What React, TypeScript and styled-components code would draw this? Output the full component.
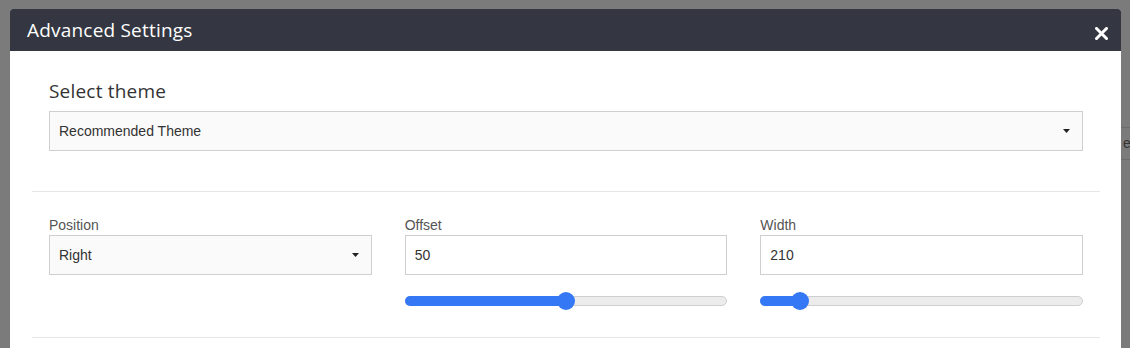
import React, {FC} from 'react';
import styled, {createGlobalStyle} from 'styled-components';

const GlobalStyle = createGlobalStyle`
  html, body {
    margin: 0;
    padding: 0;
    background: #7b7b7b;
    overflow: hidden;
  }
  * {
    box-sizing: border-box;
  }
`;

interface SliderProps {
    value: number;
    min: number;
    max: number;
}

const Slider: FC<SliderProps> = ({value, min, max}) => {
    const pct = ((value - min) / (max - min)) * 100;
    return (
        <StyledTrack>
            <StyledFill style={{width: `${pct}%`}}/>
            <StyledThumb style={{left: `${pct}%`}}/>
        </StyledTrack>
    );
};

const Caret = () => (
    <svg width="7" height="4" viewBox="0 0 7 4">
        <path d="M0 0 L7 0 L3.5 4 Z" fill="#222"/>
    </svg>
);

const CloseIcon = () => (
    <svg width="13" height="13" viewBox="0 0 13 13">
        <path d="M1.5 1.5 L11.5 11.5 M11.5 1.5 L1.5 11.5" stroke="#fff" strokeWidth="3" strokeLinecap="square"/>
    </svg>
);

const App: FC = () => {
    return (
        <>
            <GlobalStyle/>
            <StyledBackdrop>
                <StyledBackRow>
                    <span/>
                    <StyledBackCell>e</StyledBackCell>
                </StyledBackRow>
            </StyledBackdrop>
            <StyledModal>
                <StyledHeader>
                    <StyledTitle>Advanced Settings</StyledTitle>
                    <StyledClose aria-label="Close"><CloseIcon/></StyledClose>
                </StyledHeader>
                <StyledBody>
                    <StyledThemeSection>
                        <StyledHeading>Select theme</StyledHeading>
                        <StyledSelect>
                            <span>Recommended Theme</span>
                            <Caret/>
                        </StyledSelect>
                    </StyledThemeSection>
                    <StyledFieldsSection>
                        <StyledField>
                            <StyledLabel>Position</StyledLabel>
                            <StyledSelect>
                                <span>Right</span>
                                <Caret/>
                            </StyledSelect>
                        </StyledField>
                        <StyledField>
                            <StyledLabel>Offset</StyledLabel>
                            <StyledInput defaultValue="50"/>
                            <Slider value={50} min={0} max={100}/>
                        </StyledField>
                        <StyledField>
                            <StyledLabel>Width</StyledLabel>
                            <StyledInput defaultValue="210"/>
                            <Slider value={210} min={150} max={650}/>
                        </StyledField>
                    </StyledFieldsSection>
                </StyledBody>
            </StyledModal>
        </>
    );
};

const StyledBackdrop = styled.div`
  height: 348px;
  padding-top: 127px;
`;

const StyledBackRow = styled.div`
  display: grid;
  grid-template-columns: 1121px 1fr;
  height: 33px;
`;

const StyledBackCell = styled.div`
  padding-left: 2px;
  border-top: 1px solid #6c6c6c;
  border-bottom: 1px solid #6c6c6c;
  font-family: "Liberation Sans", Arial, sans-serif;
  font-size: 14px;
  line-height: 31px;
  color: #333;
  white-space: nowrap;
  overflow: hidden;
`;

const StyledModal = styled.div`
  position: absolute;
  top: 9px;
  left: 10px;
  width: 1111px;
  height: 339px;
  background: #fff;
  border-radius: 3px 3px 0 0;
  overflow: hidden;
`;

const StyledHeader = styled.div`
  height: 42px;
  background: #343741;
  display: flex;
  align-items: center;
  justify-content: space-between;
  padding: 0 13px 0 17px;
`;

const StyledTitle = styled.h3`
  margin: 0;
  font-family: "Open Sans", "Noto Sans", sans-serif;
  font-weight: 500;
  font-size: 19px;
  color: #fff;
  letter-spacing: 0.2px;
`;

const StyledClose = styled.button`
  background: none;
  border: none;
  padding: 0;
  margin-top: 6px;
  display: flex;
  cursor: pointer;
`;

const StyledBody = styled.div`
  padding: 0 21px 0 22px;
`;

const StyledSection = styled.div`
  padding: 0 17px;
  border-bottom: 1px solid #e6e6e6;
`;

const StyledThemeSection = styled(StyledSection)`
  padding-top: 28px;
  padding-bottom: 40px;
`;

const StyledFieldsSection = styled(StyledSection)`
  display: grid;
  grid-template-columns: 1fr 1fr 1fr;
  column-gap: 33px;
  padding-top: 24px;
  padding-bottom: 31px;
`;

const StyledHeading = styled.h4`
  margin: 0 0 8px;
  font-family: "Open Sans", "Noto Sans", sans-serif;
  font-weight: 500;
  font-size: 19px;
  line-height: 24px;
  color: #333;
  letter-spacing: 0.2px;
`;

const StyledField = styled.div`
  display: flex;
  flex-direction: column;
`;

const StyledLabel = styled.label`
  font-family: "Liberation Sans", Arial, sans-serif;
  font-size: 14px;
  line-height: 18px;
  color: #555;
  margin-bottom: 1px;
`;

const StyledSelect = styled.div`
  height: 40px;
  display: flex;
  align-items: center;
  justify-content: space-between;
  padding: 0 12px 0 9px;
  background: #fafafa;
  border: 1px solid #cfcfcf;
  font-family: "Liberation Sans", Arial, sans-serif;
  font-size: 14px;
  color: #333;
`;

const StyledInput = styled.input`
  height: 40px;
  width: 100%;
  padding: 0 9px;
  background: #fff;
  border: 1px solid #cfcfcf;
  font-family: "Liberation Sans", Arial, sans-serif;
  font-size: 14px;
  color: #333;
  outline: none;
`;

const StyledTrack = styled.div`
  position: relative;
  margin-top: 21px;
  height: 10px;
  border-radius: 5px;
  background: #ececec;
  border: 1px solid #cfcfcf;
`;

const StyledFill = styled.div`
  height: 10px;
  margin: -1px 0 0 -1px;
  border-radius: 5px 0 0 5px;
  background: #3478f6;
`;

const StyledThumb = styled.div`
  position: absolute;
  top: 50%;
  width: 18px;
  height: 18px;
  margin: -9px 0 0 -9px;
  border-radius: 50%;
  background: #3478f6;
`;

export default App;
